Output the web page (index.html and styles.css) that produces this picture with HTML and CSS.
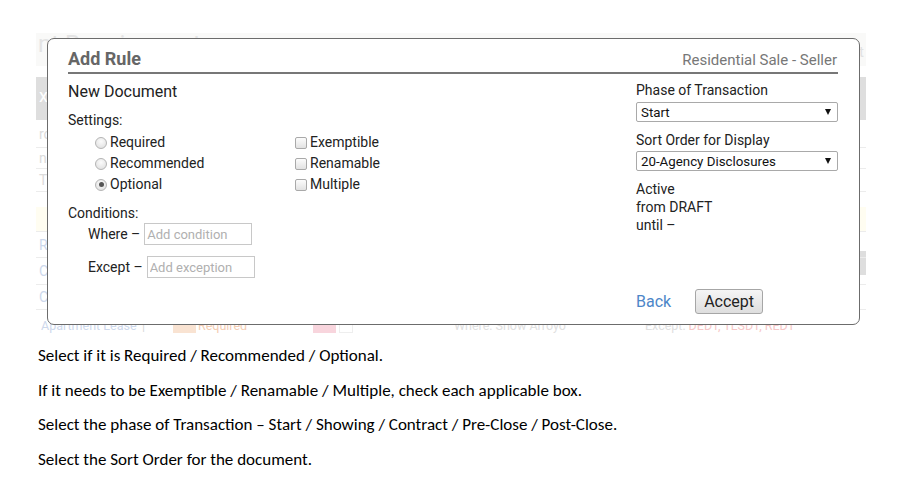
FILE: index.html
```html
<!DOCTYPE html>
<html>
<head>
<meta charset="utf-8">
<link rel="stylesheet" href="styles.css">
</head>
<body>
<div class="stage">
  <div class="bg-page">
    <div class="bg-head"><span class="bg-title">nt Requirements</span><span class="bg-t">t</span></div>
    <div class="bg-space"></div>
    <div class="bg-bar"><span class="bg-x">x</span><span class="bg-grow"></span></div>
    <div class="bg-row h28"><span class="bg-txt">ro</span></div>
    <div class="bg-row h21"><span class="bg-txt">n</span></div>
    <div class="bg-row h23"><span class="bg-txt">T</span></div>
    <div class="bg-row h15 nob"></div>
    <div class="bg-row h25 yellow"></div>
    <div class="bg-row h26"><span class="bg-link">R</span><span class="bg-grow"></span><span class="bg-gray"></span></div>
    <div class="bg-row h27"><span class="bg-link">C</span><span class="bg-grow"></span><span class="bg-gray2"></span></div>
    <div class="bg-row h25"><span class="bg-link">Co</span></div>
    <div class="bg-row h25 nob last">
      <span class="bg-link lease">Apartment Lease</span><span class="bg-sep">|</span>
      <span class="bg-badge-ico"></span><span class="bg-badge">Required</span>
      <span class="bg-pink"></span><span class="bg-box"></span>
      <span class="bg-where">Where: Show Arroyo</span>
      <span class="bg-except">Except: <em>DEDT, TLSDT, REDT</em></span>
    </div>
  </div>

  <div class="modal">
    <div class="modal-head">
      <span class="modal-title">Add Rule</span>
      <span class="modal-sub">Residential Sale - Seller</span>
    </div>
    <div class="modal-body">
      <div class="col-left">
        <div class="doc-name">New Document</div>
        <div class="label settings-label">Settings:</div>
        <div class="settings">
          <div class="opt"><span class="radio"></span>Required</div>
          <div class="opt"><span class="check"></span>Exemptible</div>
          <div class="opt"><span class="radio"></span>Recommended</div>
          <div class="opt"><span class="check"></span>Renamable</div>
          <div class="opt"><span class="radio on"></span>Optional</div>
          <div class="opt"><span class="check"></span>Multiple</div>
        </div>
        <div class="label cond-label">Conditions:</div>
        <div class="cond-row">Where –<input class="cond-input" placeholder="Add condition"></div>
        <div class="cond-row except">Except –<input class="cond-input" placeholder="Add exception"></div>
      </div>
      <div class="col-right">
        <div class="label">Phase of Transaction</div>
        <div class="select"><span>Start</span><span class="arrow"></span></div>
        <div class="label sort-label">Sort Order for Display</div>
        <div class="select sel2"><span>20-Agency Disclosures</span><span class="arrow"></span></div>
        <div class="active">Active<br>from DRAFT<br>until –</div>
        <div class="actions">
          <span class="back">Back</span>
          <button class="accept">Accept</button>
        </div>
      </div>
    </div>
  </div>
</div>

<div class="notes">
  <p>Select if it is Required / Recommended / Optional.</p>
  <p>If it needs to be Exemptible / Renamable / Multiple, check each applicable box.</p>
  <p>Select the phase of Transaction – Start / Showing / Contract / Pre-Close / Post-Close.</p>
  <p>Select the Sort Order for the document.</p>
</div>
</body>
</html>
```

FILE: styles.css
```css
html, body {
  margin: 0;
  padding: 0;
  background: #fff;
}
body {
  font-family: Roboto, "Liberation Sans", sans-serif;
  color: #222;
}
.stage {
  position: relative;
  padding: 33px 0 0 36px;
  width: 830px;
}

/* faint page behind the dialog */
.bg-page {
  width: 830px;
  height: 302px;
  display: flex;
  flex-direction: column;
  font-size: 14px;
  overflow: hidden;
}
.bg-head {
  height: 33px;
  flex: none;
  background: #f9f9f8;
  display: flex;
  align-items: flex-start;
  justify-content: space-between;
  overflow: hidden;
}
.bg-title {
  font-size: 24px;
  line-height: 22px;
  color: #e4e4e4;
  margin-left: 2px;
}
.bg-t {
  color: #e2e2e2;
  font-size: 15px;
  margin: 10px 2px 0 0;
}
.bg-space { height: 11px; flex: none; }
.bg-bar {
  height: 43px;
  flex: none;
  background: #dedede;
  display: flex;
  align-items: flex-start;
}
.bg-x {
  color: #fff;
  font-size: 18px;
  margin: 8px 0 0 3px;
}
.bg-grow { flex: 1; }
.bg-row {
  flex: none;
  box-sizing: border-box;
  border-bottom: 1px solid #ececec;
  display: flex;
  align-items: center;
}
.bg-row.nob { border-bottom: none; }
.h28 { height: 28px; }
.h21 { height: 21px; }
.h23 { height: 23px; }
.h15 { height: 15px; }
.h25 { height: 25px; }
.h26 { height: 26px; }
.h27 { height: 27px; }
.yellow { background: #fffdf1; }
.bg-txt { color: #dcdcdc; margin-left: 3px; }
.bg-link { color: #cdd8ec; margin-left: 3px; }
.bg-gray {
  width: 6px; height: 6px; background: #dedede; align-self: flex-end;
}
.bg-gray2 {
  width: 6px; height: 17px; background: #dedede; align-self: flex-start;
}
.last {
  align-items: flex-end;
  font-size: 12.5px;
  line-height: 15px;
  padding-bottom: 2px;
}
.last > span { flex: none; white-space: nowrap; overflow: hidden; }
.lease { margin-left: 5px; width: 101px; }
.bg-sep { color: #d8d8d8; width: 31px; }
.bg-badge-ico {
  width: 23px; height: 14px; background: #f9e3d2;
}
.bg-badge {
  margin-left: 2px;
  width: 115px;
  color: #f4cdb3;
}
.bg-pink {
  width: 23px; height: 14px; background: #f8d5dd;
}
.bg-box {
  box-sizing: border-box;
  width: 14px; height: 12px; border: 1px solid #eee; margin-left: 3px; margin-right: 6px;
}
.bg-where { color: #e0e0e0; margin-left: 95px; width: 191px; }
.bg-except { color: #e0e0e0; }
.bg-except em { font-style: normal; color: #f6c7c7; }

/* dialog */
.modal {
  position: absolute;
  top: 38px;
  left: 47px;
  width: 813px;
  height: 287px;
  box-sizing: border-box;
  border: 1px solid #6c6c6c;
  border-radius: 7px;
  background: #fff;
  padding: 9px 21px 10px 20px;
  display: flex;
  flex-direction: column;
}
.modal-head {
  display: flex;
  justify-content: space-between;
  align-items: baseline;
  border-bottom: 2px solid #777;
  padding-bottom: 2px;
}
.modal-title {
  font-size: 18px;
  line-height: 22px;
  font-weight: 700;
  color: #666;
}
.modal-sub {
  font-size: 15px;
  color: #777;
  margin-right: 1px;
}
.modal-body {
  flex: 1;
  display: flex;
}
.col-left {
  flex: 1;
  display: flex;
  flex-direction: column;
}
.col-right {
  width: 202px;
  display: flex;
  flex-direction: column;
}
.doc-name {
  font-size: 16px;
  line-height: 18px;
  margin-top: 9px;
  color: #222;
}
.label {
  font-size: 14px;
  line-height: 18px;
  color: #222;
}
.settings-label { margin-top: 10px; }
.settings {
  margin-top: 3px;
  padding-left: 27px;
  display: grid;
  grid-template-columns: 200px auto;
  font-size: 14px;
  line-height: 21px;
}
.opt {
  display: flex;
  align-items: center;
  color: #222;
}
.radio {
  width: 12px;
  height: 12px;
  box-sizing: border-box;
  border-radius: 50%;
  border: 1px solid #b4b4b4;
  background: radial-gradient(circle at 50% 35%, #fbfbfb, #dcdcdc);
  margin-right: 3px;
  display: flex;
  align-items: center;
  justify-content: center;
}
.radio.on::after {
  content: "";
  width: 5px;
  height: 5px;
  border-radius: 50%;
  background: #555;
}
.check {
  width: 12px;
  height: 12px;
  box-sizing: border-box;
  border: 1px solid #a9a9a9;
  border-radius: 2px;
  background: linear-gradient(#fcfcfc, #e2e2e2);
  margin-right: 3px;
}
.cond-label { margin-top: 9px; }
.cond-row {
  display: flex;
  align-items: center;
  height: 22px;
  padding-left: 20px;
  font-size: 14px;
  color: #222;
  margin-top: 1px;
}
.cond-row.except { margin-top: 11px; }
.cond-input {
  width: 108px;
  height: 22px;
  box-sizing: border-box;
  border: 1px solid #c8c8c8;
  border-radius: 0;
  margin-left: 4px;
  padding: 0 2px;
  font-family: Roboto, "Liberation Sans", sans-serif;
  font-size: 13px;
  color: #222;
  outline: none;
}
.cond-input::placeholder { color: #b0b0b0; }
.col-right .label:first-child { margin-top: 7px; }
.select {
  margin-top: 3px;
  height: 20px;
  box-sizing: border-box;
  border: 1px solid #a9a9a9;
  border-radius: 2px;
  display: flex;
  align-items: center;
  justify-content: space-between;
  padding: 0 6px 0 4px;
  font-size: 13.3px;
  color: #111;
}
.arrow {
  width: 0;
  height: 0;
  border-left: 3.5px solid transparent;
  border-right: 3.5px solid transparent;
  border-top: 6px solid #111;
}
.sort-label { margin-top: 9px; }
.sel2 { margin-top: 2px; }
.active {
  margin-top: 9px;
  font-size: 14px;
  line-height: 18px;
  color: #222;
}
.actions {
  margin-top: auto;
  display: flex;
  align-items: center;
  gap: 24px;
}
.back {
  font-size: 16px;
  color: #4d86c8;
}
.accept {
  height: 25px;
  box-sizing: border-box;
  padding: 0 8px;
  border: 1px solid #a6a6a6;
  border-radius: 3px;
  background: linear-gradient(#f5f5f5, #dedede);
  font-family: Roboto, "Liberation Sans", sans-serif;
  font-size: 16px;
  color: #222;
}

/* document text */
.notes {
  margin-top: 4px;
  padding-left: 38px;
  font-family: Carlito, Lato, "Open Sans", sans-serif;
  font-size: 17px;
  color: #000;
}
.notes p {
  margin: 0;
  line-height: 34.7px;
}
```
